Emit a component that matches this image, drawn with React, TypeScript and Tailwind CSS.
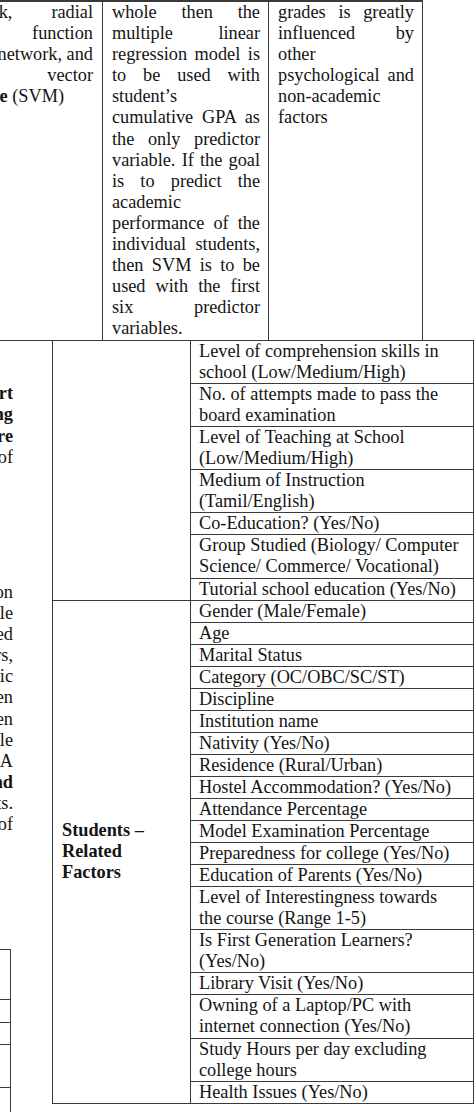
import React from "react";

type Line = { t: string; j?: boolean };

const mid: Line[] = [
  { t: "whole then the", j: true },
  { t: "multiple linear", j: true },
  { t: "regression model is", j: true },
  { t: "to be used with", j: true },
  { t: "student\u2019s" },
  { t: "cumulative GPA as", j: true },
  { t: "the only predictor", j: true },
  { t: "variable. If the goal", j: true },
  { t: "is to predict the", j: true },
  { t: "academic" },
  { t: "performance of the", j: true },
  { t: "individual students,", j: true },
  { t: "then SVM is to be", j: true },
  { t: "used with the first", j: true },
  { t: "six predictor", j: true },
  { t: "variables." },
];

const right: Line[] = [
  { t: "grades is greatly", j: true },
  { t: "influenced by", j: true },
  { t: "other" },
  { t: "psychological and", j: true },
  { t: "non-academic" },
  { t: "factors" },
];

const school: string[][] = [
  ["Level of comprehension skills in", "school (Low/Medium/High)"],
  ["No. of attempts made to pass the", "board examination"],
  ["Level of Teaching at School", "(Low/Medium/High)"],
  ["Medium of Instruction", "(Tamil/English)"],
  ["Co-Education? (Yes/No)"],
  ["Group Studied (Biology/ Computer", "Science/ Commerce/ Vocational)"],
  ["Tutorial school education (Yes/No)"],
];

const student: string[][] = [
  ["Gender (Male/Female)"],
  ["Age"],
  ["Marital Status"],
  ["Category (OC/OBC/SC/ST)"],
  ["Discipline"],
  ["Institution name"],
  ["Nativity (Yes/No)"],
  ["Residence (Rural/Urban)"],
  ["Hostel Accommodation? (Yes/No)"],
  ["Attendance Percentage"],
  ["Model Examination Percentage"],
  ["Preparedness for college (Yes/No)"],
  ["Education of Parents (Yes/No)"],
  ["Level of Interestingness towards", "the course (Range 1-5)"],
  ["Is First Generation Learners?", "(Yes/No)"],
  ["Library Visit (Yes/No)"],
  ["Owning of a Laptop/PC with", "internet connection (Yes/No)"],
  ["Study Hours per day excluding", "college hours"],
  ["Health Issues (Yes/No)"],
];

const frag1: { t: string; b?: boolean }[] = [
  { t: "part", b: true },
  { t: "using", b: true },
  { t: "are", b: true },
  { t: "of" },
];

const frag2: { t: string; b?: boolean }[] = [
  { t: "prediction" },
  { t: "while" },
  { t: "collected" },
  { t: "others," },
  { t: "academic" },
  { t: "then" },
  { t: "given" },
  { t: "while" },
  { t: "grade A" },
  { t: "and", b: true },
  { t: "students." },
  { t: "of" },
];

function Rows({ rows }: { rows: string[][] }) {
  return (
    <div className="flex flex-1 flex-col">
      {rows.map((r, i) => (
        <div
          key={i}
          className={
            "pl-[8px] leading-[21.05px] whitespace-nowrap " +
            (i < rows.length - 1 ? "border-b border-[#3a3a3a]" : "")
          }
        >
          {r.map((l, k) => (
            <div key={k}>{l}</div>
          ))}
        </div>
      ))}
    </div>
  );
}

export default function App() {
  return (
    <div className="w-[474px] h-[1112px] overflow-hidden bg-white text-[#141414] text-[18.3px] font-['Liberation_Serif','Times_New_Roman',serif]">
      {/* upper table fragment */}
      <div className="flex w-[423px] h-[341px] border-t-2 border-b border-[#3a3a3a] leading-[21.1px]">
        <div className="w-[103px] shrink-0 border-r border-[#3a3a3a] pr-[9px] overflow-hidden">
          <div className="flex justify-end whitespace-nowrap">
            <span className="shrink-0">network,</span>
            <span className="shrink-0 ml-[39px]">radial</span>
          </div>
          <div className="flex justify-end whitespace-nowrap">
            <span className="shrink-0">basis</span>
            <span className="shrink-0 ml-[60px]">function</span>
          </div>
          <div className="flex justify-end whitespace-nowrap">
            <span className="shrink-0">network, and</span>
          </div>
          <div className="flex justify-end whitespace-nowrap">
            <span className="shrink-0">support</span>
            <span className="shrink-0 ml-[60px]">vector</span>
          </div>
          <div className="flex justify-end whitespace-nowrap pr-[29px]">
            <span className="shrink-0">
              <b>machine</b> (SVM)
            </span>
          </div>
        </div>
        <div className="w-[166px] shrink-0 border-r border-[#3a3a3a] pl-[9px] pr-[8px]">
          {mid.map((l, i) => (
            <div key={i} className={l.j ? "text-justify [text-align-last:justify]" : "text-left"}>
              {l.t}
            </div>
          ))}
        </div>
        <div className="w-[154px] shrink-0 border-r border-[#3a3a3a] pl-[9px] pr-[8px]">
          {right.map((l, i) => (
            <div key={i} className={l.j ? "text-justify [text-align-last:justify]" : "text-left"}>
              {l.t}
            </div>
          ))}
        </div>
      </div>

      {/* lower part */}
      <div className="flex mt-[-1px]">
        {/* left cropped column */}
        <div className="w-[52px] shrink-0 flex flex-col">
          <div className="w-[13px] overflow-hidden mt-[43px] leading-[21.3px]">
            {frag1.map((f, i) => (
              <div key={i} className="flex justify-end whitespace-nowrap">
                <span className={"shrink-0 " + (f.b ? "font-bold" : "")}>{f.t}</span>
              </div>
            ))}
          </div>
          <div className="w-[13px] overflow-hidden mt-[113.5px] leading-[21.15px]">
            {frag2.map((f, i) => (
              <div key={i} className="flex justify-end whitespace-nowrap">
                <span className={"shrink-0 " + (f.b ? "font-bold" : "")}>{f.t}</span>
              </div>
            ))}
          </div>
          <div className="w-[11px] mt-[113.8px] border-t border-r border-[#3a3a3a] flex flex-col h-[200px]">
            <div className="h-[50px] shrink-0 border-b border-[#3a3a3a]" />
            <div className="h-[23px] shrink-0 border-b border-[#3a3a3a]" />
            <div className="h-[22px] shrink-0 border-b border-[#3a3a3a]" />
            <div className="h-[43px] shrink-0 border-b border-[#3a3a3a]" />
            <div className="flex-1" />
          </div>
        </div>

        {/* factors table */}
        <div className="w-[422px] shrink-0 border border-[#3a3a3a] self-start">
          <div className="flex border-b border-[#3a3a3a]">
            <div className="w-[138px] shrink-0 border-r border-[#3a3a3a]" />
            <Rows rows={school} />
          </div>
          <div className="flex">
            <div className="w-[138px] shrink-0 border-r border-[#3a3a3a] flex items-center pl-[9px] font-bold leading-[21.1px]">
              <div>
                Students –<br />
                Related
                <br />
                Factors
              </div>
            </div>
            <Rows rows={student} />
          </div>
        </div>
      </div>
    </div>
  );
}
